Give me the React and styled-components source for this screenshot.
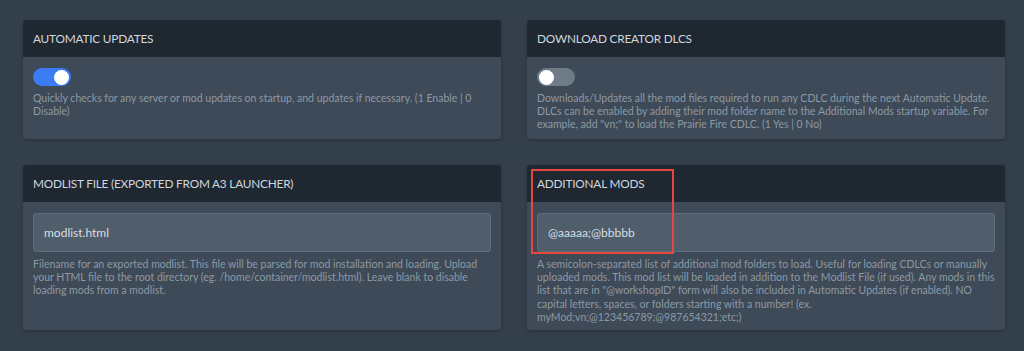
import React from 'react';
import styled, { createGlobalStyle } from 'styled-components';

const GlobalStyle = createGlobalStyle`
  html, body {
    margin: 0;
    padding: 0;
    background: #343f4c;
  }
  body {
    font-family: Lato, 'Open Sans', 'Liberation Sans', sans-serif;
  }
`;

const Page = styled.div`
  width: 1024px;
  height: 351px;
  box-sizing: border-box;
  padding: 20px 19px 0 23px;
  display: grid;
  grid-template-columns: 478px 478px;
  grid-auto-rows: 119px 165px;
  column-gap: 26px;
  row-gap: 26px;
  overflow: hidden;
`;

const Card = styled.div`
  position: relative;
  background: #3e4a57;
  border-radius: 3px;
  box-shadow: 0 1px 3px rgba(0, 0, 0, 0.25);
  display: flex;
  flex-direction: column;
`;

const Header = styled.div`
  flex-shrink: 0;
  height: 37px;
  background: #1f2731;
  border-radius: 3px 3px 0 0;
  display: flex;
  align-items: center;
  padding: 0 10px;
  color: #d0d7de;
  font-size: 11.8px;
  letter-spacing: -0.2px;
  text-transform: uppercase;
`;

const Body = styled.div`
  padding: 11px 10px 10px;
  display: flex;
  flex-direction: column;
`;

const Track = styled.div`
  width: 38px;
  height: 18px;
  border-radius: 9px;
  background: ${(p) => (p.$on ? '#3b7cf5' : '#6f7b87')};
  display: flex;
  align-items: center;
  justify-content: ${(p) => (p.$on ? 'flex-end' : 'flex-start')};
  padding: 0 2px;
  box-sizing: border-box;
`;

const Knob = styled.div`
  width: 15px;
  height: 15px;
  border-radius: 50%;
  background: #ffffff;
`;

const Input = styled.div`
  height: 39px;
  box-sizing: border-box;
  background: #505d6a;
  border: 1px solid #5f6c79;
  border-radius: 3px;
  display: flex;
  align-items: center;
  padding: 0 10px;
  color: #d8dee4;
  font-size: 12px;
`;

const Help = styled.p`
  margin: 6px 0 0;
  color: #8d99a5;
  font-size: 10.5px;
  line-height: 13.2px;
`;

const Highlight = styled.div`
  position: absolute;
  left: 4px;
  top: 4px;
  width: 143px;
  height: 85px;
  box-sizing: border-box;
  border: 2px solid #e8453f;
  pointer-events: none;
`;

const Toggle = ({ on }) => (
  <Track $on={on}>
    <Knob />
  </Track>
);

export default function App() {
  return (
    <>
      <GlobalStyle />
      <Page>
        <Card>
          <Header>Automatic Updates</Header>
          <Body>
            <Toggle on />
            <Help>
              Quickly checks for any server or mod updates on startup, and updates if necessary. (1 Enable | 0
              Disable)
            </Help>
          </Body>
        </Card>
        <Card>
          <Header>Download Creator DLCs</Header>
          <Body>
            <Toggle />
            <Help>
              Downloads/Updates all the mod files required to run any CDLC during the next Automatic Update.
              DLCs can be enabled by adding their mod folder name to the Additional Mods startup variable. For
              example, add "vn;" to load the Prairie Fire CDLC. (1 Yes | 0 No)
            </Help>
          </Body>
        </Card>
        <Card>
          <Header>Modlist File (Exported from A3 Launcher)</Header>
          <Body>
            <Input>modlist.html</Input>
            <Help>
              Filename for an exported modlist. This file will be parsed for mod installation and loading. Upload
              your HTML file to the root directory (eg. /home/container/modlist.html). Leave blank to disable
              loading mods from a modlist.
            </Help>
          </Body>
        </Card>
        <Card>
          <Header>Additional Mods</Header>
          <Body>
            <Input>@aaaaa;@bbbbb</Input>
            <Help>
              A semicolon-separated list of additional mod folders to load. Useful for loading CDLCs or manually
              uploaded mods. This mod list will be loaded in addition to the Modlist File (if used). Any mods in this
              list that are in "@workshopID" form will also be included in Automatic Updates (if enabled). NO
              capital letters, spaces, or folders starting with a number! (ex.
              myMod;vn;@123456789;@987654321;etc;)
            </Help>
          </Body>
          <Highlight />
        </Card>
      </Page>
    </>
  );
}
